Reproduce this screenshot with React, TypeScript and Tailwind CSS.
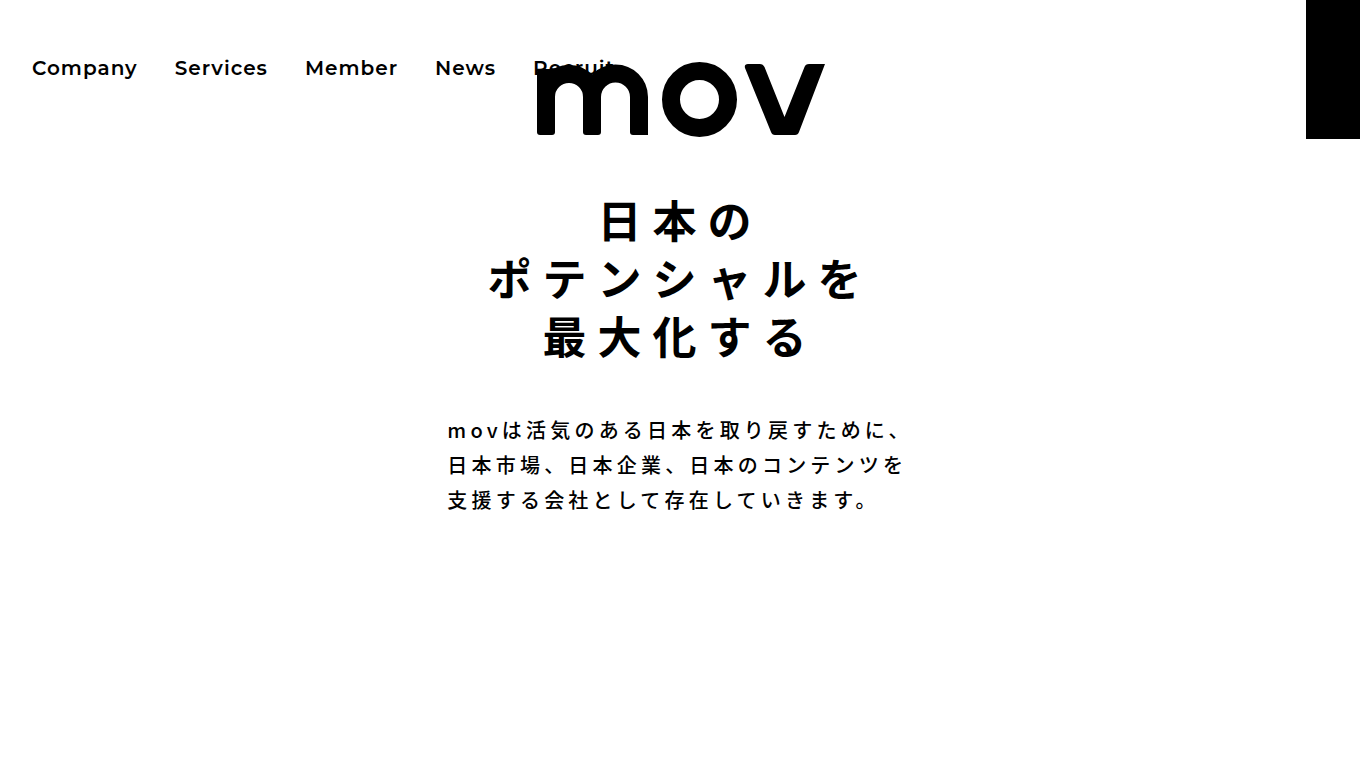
const navItems = [
  { label: 'Company', href: '#company' },
  { label: 'Services', href: '#services' },
  { label: 'Member', href: '#member' },
  { label: 'News', href: '#news' },
  { label: 'Recruit', href: '#recruit' },
];

const Header = () => {
  return (
    <header className="absolute inset-x-0 top-0 flex items-start justify-between">
      <nav className="px-8 pt-14">
        <ul className="flex gap-[37px] font-['Montserrat','Inter',sans-serif] text-xl leading-6 font-semibold tracking-[1px]">
          {navItems.map((item) => (
            <li key={item.label}>
              <a href={item.href}>{item.label}</a>
            </li>
          ))}
        </ul>
      </nav>
      <button
        type="button"
        aria-label="menu"
        className="h-[139px] w-[54px] bg-black"
      ></button>
    </header>
  );
};

const Logo = () => {
  return (
    <svg
      viewBox="-1 0 290 76"
      className="relative w-[290px]"
      role="img"
      aria-label="mov"
    >
      {/* m */}
      <g fill="none" stroke="#000" strokeWidth="18">
        <path d="M10 69V35A23 23 0 0 1 56 35V69" />
        <path d="M56 69V35A23.5 23.5 0 0 1 103 35V69" />
      </g>
      <rect x="1" y="7" width="18" height="66" rx="3" />
      <rect x="47" y="50" width="18" height="23" rx="3" />
      <path d="M94 50H112V73H97Q94 73 94 70Z" />
      {/* o */}
      <circle cx="163.500" cy="37.500" r="28.500" fill="none" stroke="#000" strokeWidth="18" />
      {/* v */}
      <path d="M212 2H224Q227 2 228.500 5L248.500 55L268.500 5Q269.500 2 273 2H289L263 70Q262 73 259 73H239Q236 73 235 70L209 6Q208 2 212 2Z" />
    </svg>
  );
};

const App = () => {
  return (
    <div className="relative min-h-screen bg-white font-['Noto_Sans_CJK_JP',sans-serif] text-black">
      <Header />
      <main className="flex flex-col items-center pt-[62px]">
        <Logo />
        <h1 className="mt-14 text-center font-['Liberation_Sans','Noto_Sans_CJK_JP',sans-serif] text-[44px] leading-[58px] font-bold tracking-[11px]">
          日本の
          <br />
          ポテンシャルを
          <br />
          最大化する
        </h1>
        <p className="mt-11 text-xl leading-[35px] font-medium tracking-[0.21em]">
          movは活気のある日本を取り戻すために、
          <br />
          日本市場、日本企業、日本のコンテンツを
          <br />
          支援する会社として存在していきます。
        </p>
      </main>
    </div>
  );
};

export default App;
